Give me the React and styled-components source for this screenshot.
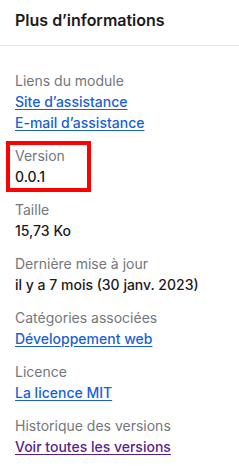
import styled, { createGlobalStyle } from "styled-components";

const GlobalStyle = createGlobalStyle`
  body {
    margin: 0;
    background: #ffffff;
    font-family: Inter, "Noto Sans", sans-serif;
    -webkit-font-smoothing: antialiased;
  }
`;

const Panel = styled.aside`
  width: 239px;
  background: #ffffff;
`;

const Header = styled.h2`
  margin: 0;
  padding: 10px 15px 14px;
  font-size: 16px;
  line-height: 21px;
  font-weight: 600;
  color: #1b1b1b;
  border-bottom: 1px solid #e3e6ea;
`;

const Body = styled.div`
  display: flex;
  flex-direction: column;
  gap: 12px;
  padding: 24px 15px 0;
`;

const Group = styled.div`
  position: relative;
  display: flex;
  flex-direction: column;
  font-size: 14px;
  line-height: 21px;

  &::before {
    content: "";
    display: ${(props) => (props.highlighted ? "block" : "none")};
    position: absolute;
    left: -9px;
    top: -4px;
    width: 85px;
    height: 51px;
    box-sizing: border-box;
    border: 4px solid #ff0000;
  }
`;

const Label = styled.span`
  color: #73777c;
`;

const Value = styled.span`
  color: #1b1b1b;
  font-weight: 450;
`;

const LinkText = styled.a`
  align-self: flex-start;
  color: ${(props) => (props.visited ? "#5a1f8e" : "#1a5fd6")};
  font-weight: 450;
  text-decoration: underline;
  text-underline-offset: 2px;
  cursor: pointer;
`;

const App = () => (
  <>
    <GlobalStyle />
    <Panel>
      <Header>Plus d’informations</Header>
      <Body>
        <Group>
          <Label>Liens du module</Label>
          <LinkText>Site d’assistance</LinkText>
          <LinkText>E-mail d’assistance</LinkText>
        </Group>
        <Group highlighted>
          <Label>Version</Label>
          <Value>0.0.1</Value>
        </Group>
        <Group>
          <Label>Taille</Label>
          <Value>15,73 Ko</Value>
        </Group>
        <Group>
          <Label>Dernière mise à jour</Label>
          <Value>il y a 7 mois (30 janv. 2023)</Value>
        </Group>
        <Group>
          <Label>Catégories associées</Label>
          <LinkText>Développement web</LinkText>
        </Group>
        <Group>
          <Label>Licence</Label>
          <LinkText>La licence MIT</LinkText>
        </Group>
        <Group>
          <Label>Historique des versions</Label>
          <LinkText visited>Voir toutes les versions</LinkText>
        </Group>
      </Body>
    </Panel>
  </>
);

export default App;
